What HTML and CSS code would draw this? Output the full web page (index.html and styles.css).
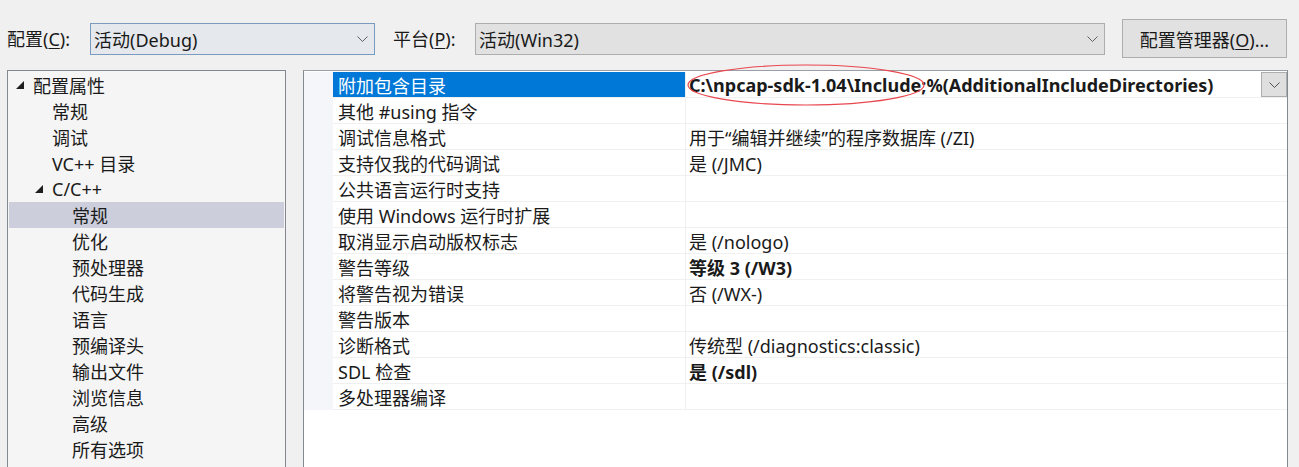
FILE: index.html
```html
<!DOCTYPE html>
<html lang="zh-CN">
<head>
<meta charset="utf-8">
<title>属性页</title>
<link rel="stylesheet" href="styles.css">
</head>
<body>
<div class="toolbar">
  <div class="label lbl-config">配置(<u>C</u>):</div>
  <div class="combo combo-active">
    <span class="combo-text">活动(Debug)</span>
    <svg class="chev" width="11" height="6" viewBox="0 0 11 6"><path d="M0.5 0.5 L5.5 5.5 L10.5 0.5" fill="none" stroke="#606060" stroke-width="1"/></svg>
  </div>
  <div class="label lbl-platform">平台(<u>P</u>):</div>
  <div class="combo combo-platform">
    <span class="combo-text">活动(Win32)</span>
    <svg class="chev" width="11" height="6" viewBox="0 0 11 6"><path d="M0.5 0.5 L5.5 5.5 L10.5 0.5" fill="none" stroke="#606060" stroke-width="1"/></svg>
  </div>
  <button class="btn">配置管理器(<u>O</u>)...</button>
</div>

<div class="main">
  <div class="tree">
    <div class="node lv0"><span class="tog"><svg width="8" height="8" viewBox="0 0 8 8"><polygon points="8,0 8,8 0,8" fill="#1e1e1e"/></svg></span>配置属性</div>
    <div class="node lv1"><span class="tog"></span>常规</div>
    <div class="node lv1"><span class="tog"></span>调试</div>
    <div class="node lv1"><span class="tog"></span>VC++ 目录</div>
    <div class="node lv1"><span class="tog"><svg width="8" height="8" viewBox="0 0 8 8"><polygon points="8,0 8,8 0,8" fill="#1e1e1e"/></svg></span>C/C++</div>
    <div class="node lv2 sel"><span class="tog"></span>常规</div>
    <div class="node lv2"><span class="tog"></span>优化</div>
    <div class="node lv2"><span class="tog"></span>预处理器</div>
    <div class="node lv2"><span class="tog"></span>代码生成</div>
    <div class="node lv2"><span class="tog"></span>语言</div>
    <div class="node lv2"><span class="tog"></span>预编译头</div>
    <div class="node lv2"><span class="tog"></span>输出文件</div>
    <div class="node lv2"><span class="tog"></span>浏览信息</div>
    <div class="node lv2"><span class="tog"></span>高级</div>
    <div class="node lv2"><span class="tog"></span>所有选项</div>
  </div>

  <div class="grid">
    <div class="prow active">
      <div class="gut"></div>
      <div class="pname">附加包含目录</div>
      <div class="pval bold">C:\npcap-sdk-1.04\Include;%(AdditionalIncludeDirectories)
        <span class="dd"><svg width="11" height="6" viewBox="0 0 11 6"><path d="M0.5 0.5 L5.5 5.5 L10.5 0.5" fill="none" stroke="#505050" stroke-width="1"/></svg></span>
      </div>
    </div>
    <div class="prow"><div class="gut"></div><div class="pname">其他 #using 指令</div><div class="pval"></div></div>
    <div class="prow"><div class="gut"></div><div class="pname">调试信息格式</div><div class="pval">用于“编辑并继续”的程序数据库 (/ZI)</div></div>
    <div class="prow"><div class="gut"></div><div class="pname">支持仅我的代码调试</div><div class="pval">是 (/JMC)</div></div>
    <div class="prow"><div class="gut"></div><div class="pname">公共语言运行时支持</div><div class="pval"></div></div>
    <div class="prow"><div class="gut"></div><div class="pname">使用 Windows 运行时扩展</div><div class="pval"></div></div>
    <div class="prow"><div class="gut"></div><div class="pname">取消显示启动版权标志</div><div class="pval">是 (/nologo)</div></div>
    <div class="prow"><div class="gut"></div><div class="pname">警告等级</div><div class="pval bold">等级 3 (/W3)</div></div>
    <div class="prow"><div class="gut"></div><div class="pname">将警告视为错误</div><div class="pval">否 (/WX-)</div></div>
    <div class="prow"><div class="gut"></div><div class="pname">警告版本</div><div class="pval"></div></div>
    <div class="prow"><div class="gut"></div><div class="pname">诊断格式</div><div class="pval">传统型 (/diagnostics:classic)</div></div>
    <div class="prow"><div class="gut"></div><div class="pname">SDL 检查</div><div class="pval bold">是 (/sdl)</div></div>
    <div class="prow"><div class="gut"></div><div class="pname">多处理器编译</div><div class="pval"></div></div>

    <svg class="mark" width="260" height="50" viewBox="0 0 260 50"><ellipse cx="127" cy="24" rx="118" ry="20" fill="none" stroke="#e8474f" stroke-width="1.2"/></svg>
  </div>
</div>
</body>
</html>
```

FILE: styles.css
```css
html, body {
  margin: 0;
  padding: 0;
}
body {
  background: #f0f0f0;
  font-family: "Noto Sans", "Noto Sans CJK SC", sans-serif;
  font-size: 18px;
  color: #1a1a1a;
  width: 1299px;
  height: 467px;
  overflow: hidden;
}
u {
  text-decoration: underline;
  text-underline-offset: 2px;
  text-decoration-thickness: 1px;
}
.toolbar {
  display: flex;
  align-items: center;
  height: 39px;
  padding-top: 19px;
}
.label {
  flex: none;
  line-height: 24px;
}
.lbl-config {
  margin-left: 7px;
  width: 83px;
}
.lbl-platform {
  margin-left: 18px;
  width: 82px;
}
.combo {
  flex: none;
  box-sizing: border-box;
  height: 32px;
  display: flex;
  align-items: center;
  padding-left: 3px;
  padding-right: 6px;
}
.combo-text {
  flex: 1;
}
.combo-active {
  width: 285px;
  background: #e5e8ec;
  border: 1px solid #7a9bbd;
}
.combo-platform {
  width: 630px;
  background: #e1e1e1;
  border: 1px solid #adadad;
}
.chev {
  flex: none;
}
.btn {
  flex: none;
  margin-left: 17px;
  width: 165px;
  height: 39px;
  box-sizing: border-box;
  background: #e1e1e1;
  border: 1px solid #adadad;
  font: inherit;
  color: inherit;
  padding: 0;
}
.main {
  display: flex;
  margin-top: 12px;
}
.tree {
  flex: none;
  box-sizing: border-box;
  margin-left: 7px;
  width: 279px;
  height: 420px;
  border: 1px solid #848891;
  background: #f5f5f5;
  padding: 1px;
}
.node {
  display: flex;
  align-items: center;
  height: 26px;
  white-space: nowrap;
}
.node.sel {
  background: #cccedb;
}
.tog {
  flex: none;
  width: 17px;
  height: 26px;
  display: flex;
  align-items: center;
  padding-bottom: 1px;
  box-sizing: border-box;
}
.lv0 { padding-left: 7px; }
.lv1 { padding-left: 26px; }
.lv2 { padding-left: 46px; }
.grid {
  position: relative;
  flex: none;
  box-sizing: border-box;
  margin-left: 17px;
  width: 985px;
  height: 420px;
  border: 1px solid #848891;
  border-top-color: #9a9ea6;
  background: #ffffff;
  padding-top: 1px;
}
.prow {
  display: grid;
  grid-template-columns: 29px 352px 1fr;
  height: 26px;
}
.gut {
  background: #f4f6fa;
}
.pname, .pval {
  border-bottom: 1px solid #f0f0f0;
  display: flex;
  align-items: center;
  white-space: nowrap;
  overflow: hidden;
}
.pname {
  padding-left: 5px;
}
.pval {
  border-left: 1px solid #f0f0f0;
  padding-left: 3px;
}
.prow.active .pname {
  background: #0078d7;
  color: #ffffff;
}
.bold {
  font-weight: 700;
}
.dd {
  margin-left: auto;
  flex: none;
  box-sizing: border-box;
  width: 26px;
  height: 25px;
  background: #dfdfdf;
  border: 1px solid #adadad;
  display: flex;
  align-items: center;
  justify-content: center;
}
.mark {
  position: absolute;
  left: 375px;
  top: -10px;
  pointer-events: none;
}
```
